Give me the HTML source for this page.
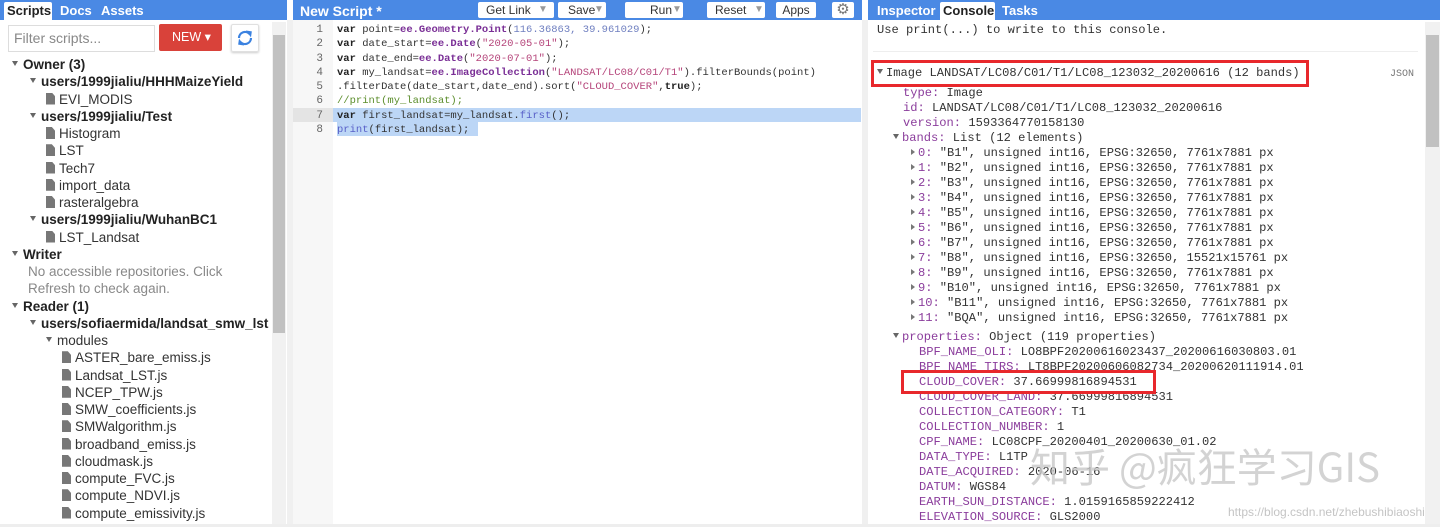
<!DOCTYPE html>
<html><head><meta charset="utf-8"><style>
*{margin:0;padding:0;box-sizing:border-box}
body{width:1440px;height:527px;overflow:hidden;background:#fff;font-family:"Liberation Sans",sans-serif;position:relative}
.abs{position:absolute;white-space:pre}
.bar{position:absolute;top:0;height:20px;background:#4a89e4}
.tab{position:absolute;top:2px;height:18px;font:bold 13px "Liberation Sans",sans-serif;color:#fff;line-height:17px;padding:0 3px}
.tab.on{background:#fff;color:#222;border-radius:2px 2px 0 0}
.tree{position:absolute;font-size:13.5px;color:#333;white-space:nowrap;line-height:17.25px}
.tree div{height:17.25px}
.b{font-weight:bold;color:#222}
.tri{display:inline-block;width:0;height:0;border-left:3.5px solid transparent;border-right:3.5px solid transparent;border-top:5px solid #666;margin-right:5px;vertical-align:3px}
.doc{display:inline-block;width:9px;height:12px;background:#777;margin-right:4px;vertical-align:-1px;clip-path:polygon(0 0,65% 0,100% 30%,100% 100%,0 100%)}
.code{position:absolute;left:337px;font:10.5px/14.3px "Liberation Mono",monospace;color:#333;white-space:pre}
.ln{position:absolute;left:293px;width:30px;text-align:right;font:11px/14.3px "Liberation Mono",monospace;color:#666}
.k{color:#222;font-weight:bold}.f{color:#7a2f96;font-weight:bold}.n{color:#6f7fc0}.s{color:#b5447a}.c{color:#5c8e2c}.p{color:#5860c8}
.btn{position:absolute;top:2px;height:16px;background:#fff;border-radius:2px;font:12px/16px "Liberation Sans",sans-serif;color:#333;white-space:nowrap}
.btn i{position:absolute;top:0;font-style:normal;color:#999;font-size:10px}
.con{position:absolute;font:12.1px/15px "Liberation Mono",monospace;color:#333;white-space:pre}
.key{color:#8b3d9c}
.rt{display:inline-block;width:0;height:0;border-top:3.5px solid transparent;border-bottom:3.5px solid transparent;border-left:4px solid #777;margin-right:3px;vertical-align:1px}
.dt{display:inline-block;width:0;height:0;border-left:3.5px solid transparent;border-right:3.5px solid transparent;border-top:5px solid #666;margin-right:3px;vertical-align:2px}
</style></head><body>
<div class="bar" style="left:0;width:287px"></div>
<div class="bar" style="left:293px;width:569px"></div>
<div class="bar" style="left:868px;width:572px"></div>
<div class="tab on" style="left:4px;width:48px">Scripts</div>
<div class="tab" style="left:57px">Docs</div>
<div class="tab" style="left:98px">Assets</div>
<div class="tab" style="left:297px;font-size:14px;top:3px">New Script *</div>
<div class="btn" style="left:478px;width:76px;padding-left:8px">Get Link<i style="left:60px">&#9660;</i></div>
<div class="btn" style="left:558px;width:48px;padding-left:10px">Save<i style="left:36px">&#9660;</i></div>
<div class="btn" style="left:625px;width:58px;padding-left:25px">Run<i style="left:47px">&#9660;</i></div>
<div class="btn" style="left:707px;width:58px;padding-left:8px">Reset<i style="left:47px">&#9660;</i></div>
<div class="btn" style="left:776px;width:40px;text-align:center">Apps</div>
<div class="btn" style="left:832px;width:22px;color:#777;font-size:15px;text-align:center">&#9881;</div>
<div class="tab" style="left:874px">Inspector</div>
<div class="tab on" style="left:940px;width:55px">Console</div>
<div class="tab" style="left:999px">Tasks</div>

<div class="abs" style="left:8px;top:25px;width:147px;height:27px;border:1px solid #ddd;font-size:14px;color:#888;line-height:25px;padding-left:5px">Filter scripts...</div>
<div class="abs" style="left:159px;top:24px;width:63px;height:27px;background:#d9423a;border-radius:2px;color:#fff;font-size:12.5px;line-height:27px;padding-left:13px">NEW &#9662;</div>
<div class="abs" style="left:231px;top:24px;width:28px;height:28px;border:1px solid #e0e0e0;border-radius:2px;box-shadow:0 1px 2px #ccc"><svg width="26" height="26" viewBox="0 0 26 26"><path d="M7 13a6 6 0 0 1 10.5-4" fill="none" stroke="#3b82e0" stroke-width="2.2"/><path d="M19 13a6 6 0 0 1-10.5 4" fill="none" stroke="#3b82e0" stroke-width="2.2"/><path d="M15.5 6.5l3.5 0.5-0.5 3.5z" fill="#3b82e0" stroke="#3b82e0" stroke-width="1.5"/><path d="M10.5 19.5l-3.5-0.5 0.5-3.5z" fill="#3b82e0" stroke="#3b82e0" stroke-width="1.5"/></svg></div>
<div class="abs" style="left:272px;top:22px;width:14px;height:503px;background:#f1f1f1"></div>
<div class="abs" style="left:273px;top:35px;width:12px;height:298px;background:#c1c1c1"></div>
<div class="abs" style="left:287px;top:20px;width:6px;height:507px;background:#f0f0f0"></div>
<div class="tree" style="left:12px;top:56px"><div><span class="tri"></span><span class="b">Owner (3)</span></div><div style="padding-left:18px"><span class="tri"></span><span class="b">users/1999jialiu/HHHMaizeYield</span></div><div style="padding-left:34px"><span class="doc"></span>EVI_MODIS</div><div style="padding-left:18px"><span class="tri"></span><span class="b">users/1999jialiu/Test</span></div><div style="padding-left:34px"><span class="doc"></span>Histogram</div><div style="padding-left:34px"><span class="doc"></span>LST</div><div style="padding-left:34px"><span class="doc"></span>Tech7</div><div style="padding-left:34px"><span class="doc"></span>import_data</div><div style="padding-left:34px"><span class="doc"></span>rasteralgebra</div><div style="padding-left:18px"><span class="tri"></span><span class="b">users/1999jialiu/WuhanBC1</span></div><div style="padding-left:34px"><span class="doc"></span>LST_Landsat</div><div><span class="tri"></span><span class="b">Writer</span></div><div style="padding-left:16px;color:#888">No accessible repositories. Click</div><div style="padding-left:16px;color:#888">Refresh to check again.</div><div><span class="tri"></span><span class="b">Reader (1)</span></div><div style="padding-left:18px"><span class="tri"></span><span class="b">users/sofiaermida/landsat_smw_lst</span></div><div style="padding-left:34px"><span class="tri"></span>modules</div><div style="padding-left:50px"><span class="doc"></span>ASTER_bare_emiss.js</div><div style="padding-left:50px"><span class="doc"></span>Landsat_LST.js</div><div style="padding-left:50px"><span class="doc"></span>NCEP_TPW.js</div><div style="padding-left:50px"><span class="doc"></span>SMW_coefficients.js</div><div style="padding-left:50px"><span class="doc"></span>SMWalgorithm.js</div><div style="padding-left:50px"><span class="doc"></span>broadband_emiss.js</div><div style="padding-left:50px"><span class="doc"></span>cloudmask.js</div><div style="padding-left:50px"><span class="doc"></span>compute_FVC.js</div><div style="padding-left:50px"><span class="doc"></span>compute_NDVI.js</div><div style="padding-left:50px"><span class="doc"></span>compute_emissivity.js</div></div>

<div class="abs" style="left:293px;top:20px;width:40px;height:507px;background:#f7f7f7"></div>
<div class="abs" style="left:293px;top:108px;width:40px;height:14px;background:#e4e4e4"></div>
<div class="abs" style="left:333px;top:108px;width:528px;height:14px;background:#bcd6f6"></div>
<div class="abs" style="left:337px;top:122px;width:141px;height:14px;background:#bcd6f6"></div>
<div class="abs" style="left:862px;top:20px;width:6px;height:507px;background:#f0f0f0"></div>
<div class="ln" style="top:23px">1<br>2<br>3<br>4<br>5<br>6<br>7<br>8</div>
<div class="code" style="top:23px"><span class="k">var</span> point=<span class="f">ee.Geometry.Point</span>(<span class="n">116.36863, 39.961029</span>);
<span class="k">var</span> date_start=<span class="f">ee.Date</span>(<span class="s">"2020-05-01"</span>);
<span class="k">var</span> date_end=<span class="f">ee.Date</span>(<span class="s">"2020-07-01"</span>);
<span class="k">var</span> my_landsat=<span class="f">ee.ImageCollection</span>(<span class="s">"LANDSAT/LC08/C01/T1"</span>).filterBounds(point)
.filterDate(date_start,date_end).sort(<span class="s">"CLOUD_COVER"</span>,<span class="k">true</span>);
<span class="c">//print(my_landsat);</span>
<span class="k">var</span> first_landsat=my_landsat.<span class="p">first</span>();
<span class="p">print</span>(first_landsat);</div>

<div class="abs" style="left:1425px;top:22px;width:15px;height:505px;background:#f1f1f1"></div>
<div class="abs" style="left:1426px;top:35px;width:13px;height:112px;background:#c1c1c1"></div>
<div class="abs" style="left:873px;top:51px;width:545px;height:1px;background:#eee"></div>
<div class="con" style="left:877px;top:23px">Use print(...) to write to this console.</div>
<div class="abs" style="left:871px;top:60px;width:438px;height:27px;border:3px solid #e8282c"></div>
<div class="con" style="left:877px;top:66px"><span class="dt"></span>Image LANDSAT/LC08/C01/T1/LC08_123032_20200616 (12 bands)</div>
<div class="abs" style="left:1390px;top:69px;font:10px 'Liberation Mono',monospace;color:#777">JSON</div>
<div class="con" style="left:903px;top:86px"><span class="key">type:</span> Image
<span class="key">id:</span> LANDSAT/LC08/C01/T1/LC08_123032_20200616
<span class="key">version:</span> 1593364770158130</div>
<div class="con" style="left:893px;top:131px"><span class="dt"></span><span class="key">bands:</span> List (12 elements)</div>
<div class="con" style="left:911px;top:146px"><span class="rt"></span><span class="key">0:</span> "B1", unsigned int16, EPSG:32650, 7761x7881 px
<span class="rt"></span><span class="key">1:</span> "B2", unsigned int16, EPSG:32650, 7761x7881 px
<span class="rt"></span><span class="key">2:</span> "B3", unsigned int16, EPSG:32650, 7761x7881 px
<span class="rt"></span><span class="key">3:</span> "B4", unsigned int16, EPSG:32650, 7761x7881 px
<span class="rt"></span><span class="key">4:</span> "B5", unsigned int16, EPSG:32650, 7761x7881 px
<span class="rt"></span><span class="key">5:</span> "B6", unsigned int16, EPSG:32650, 7761x7881 px
<span class="rt"></span><span class="key">6:</span> "B7", unsigned int16, EPSG:32650, 7761x7881 px
<span class="rt"></span><span class="key">7:</span> "B8", unsigned int16, EPSG:32650, 15521x15761 px
<span class="rt"></span><span class="key">8:</span> "B9", unsigned int16, EPSG:32650, 7761x7881 px
<span class="rt"></span><span class="key">9:</span> "B10", unsigned int16, EPSG:32650, 7761x7881 px
<span class="rt"></span><span class="key">10:</span> "B11", unsigned int16, EPSG:32650, 7761x7881 px
<span class="rt"></span><span class="key">11:</span> "BQA", unsigned int16, EPSG:32650, 7761x7881 px</div>
<div class="con" style="left:893px;top:330px"><span class="dt"></span><span class="key">properties:</span> Object (119 properties)</div>
<div class="con" style="left:919px;top:345px"><span class="key">BPF_NAME_OLI:</span> LO8BPF20200616023437_20200616030803.01
<span class="key">BPF_NAME_TIRS:</span> LT8BPF20200606082734_20200620111914.01
<span class="key">CLOUD_COVER:</span> 37.66999816894531
<span class="key">CLOUD_COVER_LAND:</span> 37.66999816894531
<span class="key">COLLECTION_CATEGORY:</span> T1
<span class="key">COLLECTION_NUMBER:</span> 1
<span class="key">CPF_NAME:</span> LC08CPF_20200401_20200630_01.02
<span class="key">DATA_TYPE:</span> L1TP
<span class="key">DATE_ACQUIRED:</span> 2020-06-16
<span class="key">DATUM:</span> WGS84
<span class="key">EARTH_SUN_DISTANCE:</span> 1.0159165859222412
<span class="key">ELEVATION_SOURCE:</span> GLS2000</div>
<div class="abs" style="left:901px;top:370px;width:255px;height:24px;border:3px solid #e8282c"></div>
<div class="abs" style="left:1030px;top:440px;font:40px/50px 'Noto Sans CJK SC',sans-serif;color:rgba(200,200,200,0.8)">知乎 @疯狂学习GIS</div>
<div class="abs" style="left:1228px;top:505px;font:12px 'Liberation Sans',sans-serif;color:rgba(190,190,190,0.9)">https://blog.csdn.net/zhebushibiaoshi</div>
<div class="abs" style="left:0;top:524px;width:1440px;height:3px;background:#eee"></div>
</body></html>
